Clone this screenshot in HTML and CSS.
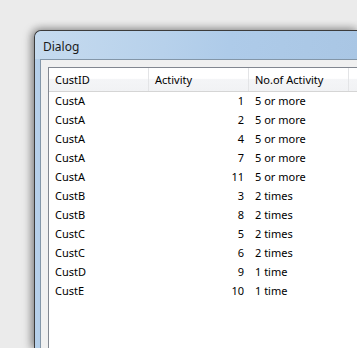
FILE: index.html
```html
<!DOCTYPE html>
<html>
<head>
<meta charset="utf-8">
<link rel="stylesheet" href="styles.css">
</head>
<body>
<div class="window">
  <div class="titlebar"><span class="title">Dialog</span></div>
  <div class="frame">
    <div class="client">
      <div class="table">
        <div class="row head">
          <div class="cell">CustID</div>
          <div class="cell">Activity</div>
          <div class="cell">No.of Activity</div>
          <div class="cell fill"></div>
        </div>
        <div class="row"><div class="cell">CustA</div><div class="cell num">1</div><div class="cell">5 or more</div></div>
        <div class="row"><div class="cell">CustA</div><div class="cell num">2</div><div class="cell">5 or more</div></div>
        <div class="row"><div class="cell">CustA</div><div class="cell num">4</div><div class="cell">5 or more</div></div>
        <div class="row"><div class="cell">CustA</div><div class="cell num">7</div><div class="cell">5 or more</div></div>
        <div class="row"><div class="cell">CustA</div><div class="cell num">11</div><div class="cell">5 or more</div></div>
        <div class="row"><div class="cell">CustB</div><div class="cell num">3</div><div class="cell">2 times</div></div>
        <div class="row"><div class="cell">CustB</div><div class="cell num">8</div><div class="cell">2 times</div></div>
        <div class="row"><div class="cell">CustC</div><div class="cell num">5</div><div class="cell">2 times</div></div>
        <div class="row"><div class="cell">CustC</div><div class="cell num">6</div><div class="cell">2 times</div></div>
        <div class="row"><div class="cell">CustD</div><div class="cell num">9</div><div class="cell">1 time</div></div>
        <div class="row"><div class="cell">CustE</div><div class="cell num">10</div><div class="cell">1 time</div></div>
      </div>
    </div>
  </div>
</div>
</body>
</html>
```
FILE: styles.css
```css
html, body {
  margin: 0;
  padding: 0;
  height: 348px;
  overflow: hidden;
  background: #ebebeb;
}
body {
  font-family: "Noto Sans", "Open Sans", sans-serif;
  font-size: 11px;
  color: #000;
}
.window {
  margin-left: 34px;
  margin-top: 30px;
  width: 323px;
  height: 318px;
  border: 1px solid #3c3c3c;
  border-right: none;
  border-bottom: none;
  border-top-left-radius: 7px;
  background: #b5cfe9;
  box-shadow: -3px 0 8px rgba(0,0,0,0.35), 0 -2px 8px rgba(0,0,0,0.2);
  display: flex;
  flex-direction: column;
  overflow: hidden;
}
.titlebar {
  height: 28px;
  flex: none;
  background: linear-gradient(100deg, #c6dbef 0%, #b7d1eb 40%, #aecbe9 60%, #a9c6e4 100%);
  border-top-left-radius: 6px;
  display: flex;
  align-items: center;
  padding-left: 8px;
}
.title {
  font-size: 12px;
  color: #1a1a1a;
  position: relative;
  top: 1px;
}
.frame {
  flex: 1;
  padding-left: 5px;
  display: flex;
}
.client {
  flex: 1;
  background: #f0f0f0;
  border-left: 1px solid #8396a8;
  border-top: 1px solid #8396a8;
  padding: 7px 0 0 7px;
  display: flex;
}
.table {
  flex: 1;
  background: #fff;
  border-left: 1px solid #828790;
  border-top: 1px solid #828790;
}
.row {
  display: flex;
  height: 19px;
  align-items: center;
}
.row.head {
  height: 23px;
  background: linear-gradient(#ffffff 0%, #ffffff 45%, #f4f5f7 50%, #f1f2f4 100%);
  border-bottom: 1px solid #d5d5d5;
  align-items: stretch;
}
.row:nth-child(2) {
  margin-top: -1px;
}
.cell {
  width: 100px;
  box-sizing: border-box;
  padding: 0 6px;
  white-space: nowrap;
}
.head .cell {
  border-right: 1px solid #e3e4e6;
  display: flex;
  align-items: center;
  padding-left: 6px;
}
.head .cell.fill {
  flex: 1;
  border-right: none;
}
.num {
  text-align: right;
  padding-right: 5px;
}
```
